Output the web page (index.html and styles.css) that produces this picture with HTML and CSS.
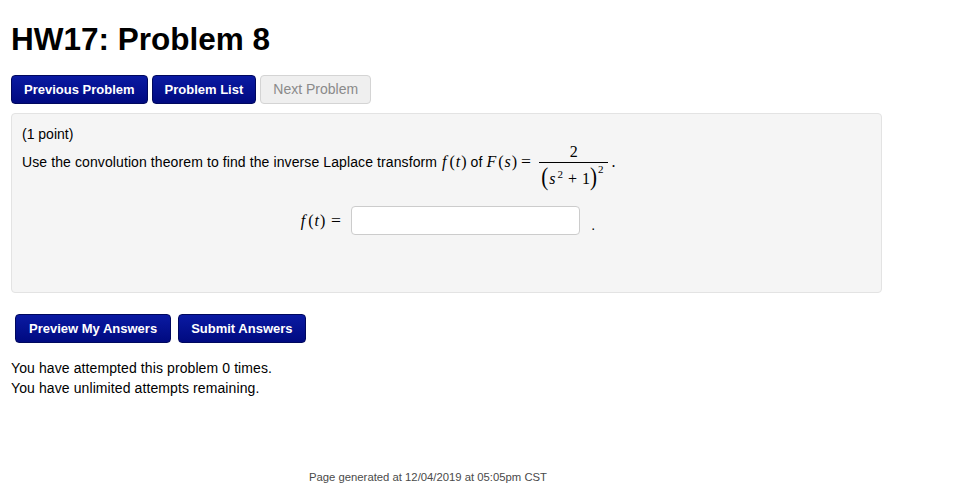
FILE: index.html
```html
<!DOCTYPE html>
<html lang="en">
<head>
<meta charset="utf-8">
<title>HW17: Problem 8</title>
<link rel="stylesheet" href="styles.css">
</head>
<body>
<div class="page">
  <h1 class="title">HW17: Problem 8</h1>
  <div class="nav">
    <a class="btn btn-primary">Previous Problem</a>
    <a class="btn btn-primary">Problem List</a>
    <a class="btn btn-disabled">Next Problem</a>
  </div>
  <div class="problem">
    <p class="points">(1 point)</p>
    <p class="statement">Use the convolution theorem to find the inverse Laplace transform <span class="m"><span class="mi f">f</span><span class="mo">(</span><span class="mi t">t</span><span class="mo">)</span></span> of <span class="m"><span class="mi F">F</span><span class="mo">(</span><span class="mi s">s</span><span class="mo">)</span><span class="eq">=</span><span class="frac"><span class="num">2</span><span class="den"><span class="big">(</span><span class="mi s">s</span><span class="sup">2</span><span class="plus">+</span><span class="one">1</span><span class="big">)</span><span class="sup2">2</span></span></span><span class="dot">.</span></span></p>
    <div class="answer">
      <span class="m"><span class="mi f">f</span><span class="mo">(</span><span class="mi t">t</span><span class="mo">)</span><span class="eq">=</span></span>
      <span class="input"></span>
      <span class="enddot">.</span>
    </div>
  </div>
  <div class="actions">
    <a class="btn btn-primary btn-wide">Preview My Answers</a>
    <a class="btn btn-primary">Submit Answers</a>
  </div>
  <div class="attempts">
    <div>You have attempted this problem 0 times.</div>
    <div>You have unlimited attempts remaining.</div>
  </div>
  <div class="footer">Page generated at 12/04/2019 at 05:05pm CST</div>
</div>
</body>
</html>
```

FILE: styles.css
```css
html, body {
  margin: 0;
  padding: 0;
  background: #fff;
}
body {
  font-family: "Liberation Sans", Arial, Helvetica, sans-serif;
  font-size: 14px;
  line-height: 20px;
  color: #000;
}
.page {
  padding-left: 11px;
}
.title {
  margin: 19px 0 16px 0;
  font-size: 31.5px;
  line-height: 40px;
  font-weight: bold;
}
.nav {
  display: flex;
  gap: 4px;
}
.btn {
  display: inline-block;
  box-sizing: border-box;
  height: 29px;
  padding: 4px 12px;
  border: 1px solid #000066;
  border-radius: 4px;
  font-size: 13px;
  line-height: 19px;
  font-weight: bold;
  text-decoration: none;
}
.btn-primary {
  color: #fff;
  background: linear-gradient(to bottom, #0a1aa2, #000a80);
  border-color: #00085e;
}
.btn-wide {
  padding: 4px 13px;
}
.btn-disabled {
  color: #8a8a8a;
  font-weight: normal;
  font-size: 14px;
  background: #efefef;
  border-color: #d4d4d4;
}
.problem {
  box-sizing: border-box;
  width: 871px;
  height: 180px;
  margin-top: 9px;
  padding: 10px;
  background: #f5f5f5;
  border: 1px solid #e3e3e3;
  border-radius: 4px;
}
.points {
  margin: 0;
}
.statement {
  margin: 0;
  letter-spacing: 0.1px;
}
.m {
  font-family: "Liberation Serif", "Times New Roman", serif;
  font-size: 16px;
  letter-spacing: 0;
}
.mi {
  font-style: italic;
}
.f {
  padding-right: 3px;
  padding-left: 1px;
}
.t {
  padding: 0 1px;
}
.F {
  padding-right: 2px;
}
.s {
  padding: 0 1px;
}
.eq {
  display: inline-block;
  width: 10px;
  margin: 0 8px 0 4px;
  text-align: center;
  transform: scaleX(1.1);
}
.frac {
  display: inline-flex;
  flex-direction: column;
  align-items: center;
  vertical-align: 10px;
}
.num {
  line-height: 16px;
  padding-bottom: 2px;
  border-bottom: 1px solid #000;
  align-self: stretch;
  text-align: center;
}
.den {
  display: flex;
  align-items: baseline;
  padding: 1px 5px 0 2px;
  line-height: 26px;
}
.big {
  font-size: 21px;
  display: inline-block;
  transform: scaleY(1.15);
}
.sup {
  font-size: 11px;
  position: relative;
  top: -6px;
  margin-left: 1px;
}
.sup2 {
  font-size: 11px;
  position: relative;
  top: -11px;
  margin-left: 1px;
}
.plus {
  margin: 0 5px;
}
.dot {
  margin-left: 3px;
}
.answer {
  display: flex;
  justify-content: center;
  align-items: center;
  margin-top: 13px;
  padding-left: 2px;
}
.answer .eq {
  margin: 0 6px 0 6px;
}
.input {
  display: inline-block;
  box-sizing: border-box;
  width: 229px;
  height: 29px;
  margin-left: 4px;
  background: #fff;
  border: 1px solid #cccccc;
  border-radius: 4px;
}
.enddot {
  margin-left: 11px;
  padding-top: 8px;
  color: #000;
}
.actions {
  display: flex;
  gap: 7px;
  margin: 21px 0 0 4px;
}
.attempts {
  margin-top: 15px;
  letter-spacing: 0.1px;
}
.footer {
  width: 834px;
  margin-top: 71px;
  text-align: center;
  font-size: 11.3px;
  line-height: 16px;
  color: #4a4a4a;
}
```
